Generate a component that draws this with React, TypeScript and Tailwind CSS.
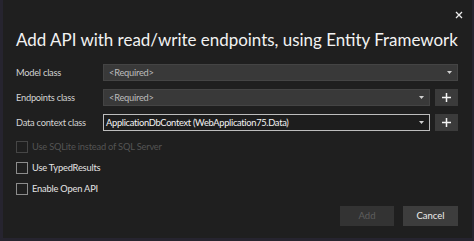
import React from 'react';

const font = { fontFamily: 'Lato, "Noto Sans", sans-serif' };

const Caret = () => (
  <svg width="5" height="3" viewBox="0 0 5 3" className="shrink-0">
    <path d="M0 0 H5 L2.5 3 Z" fill="#d0d0d0" />
  </svg>
);

const Plus = () => (
  <button className="w-[23px] h-[17px] bg-[#3b3b3b] flex items-center justify-center shrink-0">
    <svg width="9" height="9" viewBox="0 0 9 9">
      <path d="M4.5 0 V9 M0 4.5 H9" stroke="#f4f4f4" strokeWidth="1.5" />
    </svg>
  </button>
);

interface FieldProps {
  label: string;
  value: string;
  focused?: boolean;
  addable?: boolean;
}

const Field: React.FC<FieldProps> = ({ label, value, focused, addable }) => (
  <div className="flex items-center h-[17px]">
    <span className="w-[87px] text-[9.3px] tracking-[-0.25px] text-[#d4d4d4] shrink-0 whitespace-nowrap">{label}</span>
    <div className="flex-1 flex items-center gap-[5px]">
      <div
        className={
          focused
            ? 'flex-1 h-[17px] flex items-center justify-between pl-[2px] pr-[5px] bg-[#1d1d1d] border border-[#bdbdbd] text-[9.3px] tracking-[-0.3px] text-[#f4f4f4]'
            : 'flex-1 h-[17px] flex items-center justify-between pl-[5px] pr-[5px] bg-[#393939] border border-[#444444] text-[9.3px] tracking-[-0.25px] text-[#bcbcbc]'
        }
      >
        <span className="leading-none whitespace-nowrap">{value}</span>
        <Caret />
      </div>
      {addable && <Plus />}
    </div>
  </div>
);

const Check: React.FC<{ label: string; disabled?: boolean }> = ({ label, disabled }) => (
  <label className="flex items-center gap-[4px] h-[12px]">
    <span
      className={
        disabled
          ? 'w-[12px] h-[12px] border border-[#464646] shrink-0'
          : 'w-[12px] h-[12px] border border-[#8c8c8c] shrink-0'
      }
    />
    <span
      className={
        disabled
          ? 'text-[9.3px] tracking-[-0.2px] text-[#545454] whitespace-nowrap'
          : 'text-[9.3px] tracking-[-0.2px] text-[#e4e4e4] whitespace-nowrap'
      }
    >
      {label}
    </span>
  </label>
);

export default function App() {
  return (
    <div className="w-[474px] h-[241px] bg-[#26242f] pl-[3px] pr-[2px] pb-[3px]" style={font}>
      <div className="h-full bg-[#1f1f1f] flex flex-col pl-[13px] pr-[14px]">
        <div className="flex justify-end pt-[11px] h-[22px] -mr-[5px]">
          <svg width="8" height="8" viewBox="0 0 8 8">
            <path d="M1 1 L7 7 M7 1 L1 7" stroke="#ececec" strokeWidth="1.3" />
          </svg>
        </div>
        <h1 className="text-[16.95px] leading-[20px] text-[#f2f2f2] mt-[8px] whitespace-nowrap">
          Add API with read/write endpoints, using Entity Framework
        </h1>
        <div className="flex flex-col gap-[8px] mt-[14px]">
          <Field label="Model class" value="<Required>" />
          <Field label="Endpoints class" value="<Required>" addable />
          <Field label="Data context class" value="ApplicationDbContext (WebApplication75.Data)" focused addable />
        </div>
        <div className="flex flex-col gap-[9px] mt-[10px]">
          <Check label="Use SQLite instead of SQL Server" disabled />
          <Check label="Use TypedResults" />
          <Check label="Enable Open API" />
        </div>
        <div className="flex justify-end gap-[9px] mt-[11px]">
          <button className="w-[54px] h-[20px] bg-[#333333] text-[9.5px] text-[#5e5e5e]">Add</button>
          <button className="w-[55px] h-[20px] bg-[#3d3d3d] text-[9.5px] text-[#ededed]">Cancel</button>
        </div>
      </div>
    </div>
  );
}
